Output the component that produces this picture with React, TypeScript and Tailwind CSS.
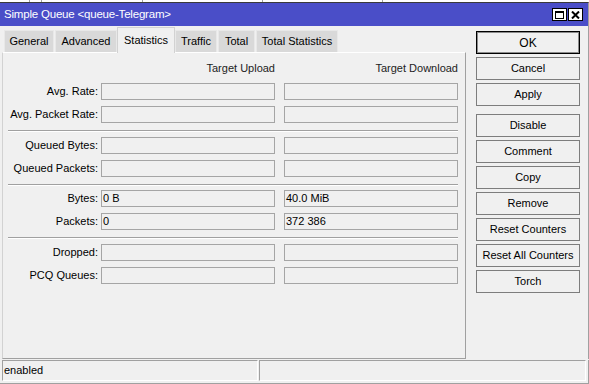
import React from 'react';

const tabs = [
  { label: 'General', w: 'w-[50px]', ml: 'ml-[2px]' },
  { label: 'Advanced', w: 'w-[62px]', ml: 'ml-[1px]' },
  { label: 'Statistics', w: 'w-[58px]', ml: 'ml-0', active: true },
  { label: 'Traffic', w: 'w-[42px]', ml: 'ml-0' },
  { label: 'Total', w: 'w-[37px]', ml: 'ml-[1px]' },
  { label: 'Total Statistics', w: 'w-[82px]', ml: 'ml-[1px]' },
];

const groups: { label: string; up?: string; down?: string }[][] = [
  [{ label: 'Avg. Rate:' }, { label: 'Avg. Packet Rate:' }],
  [{ label: 'Queued Bytes:' }, { label: 'Queued Packets:' }],
  [
    { label: 'Bytes:', up: '0 B', down: '40.0 MiB' },
    { label: 'Packets:', up: '0', down: '372 386' },
  ],
  [{ label: 'Dropped:' }, { label: 'PCQ Queues:' }],
];

const sepGaps = ['mt-[7px] mb-[5px]', 'mt-[7px] mb-[4px]', 'mt-[7px] mb-[5px]'];

const buttons = [
  ['Cancel', 'mt-[3px]'],
  ['Apply', 'mt-[3px]'],
  ['Disable', 'mt-[8px]'],
  ['Comment', 'mt-[3px]'],
  ['Copy', 'mt-[3px]'],
  ['Remove', 'mt-[3px]'],
  ['Reset Counters', 'mt-[3px]'],
  ['Reset All Counters', 'mt-[3px]'],
  ['Torch', 'mt-[3px]'],
];

function Field({ value }: { value?: string }) {
  return (
    <div className="w-[174px] h-[17px] border border-[#a5a5a5] pl-[1px] flex items-center leading-none text-black">
      {value}
    </div>
  );
}

function Row({ label, up, down }: { label: string; up?: string; down?: string }) {
  return (
    <div className="flex items-center h-[17px]">
      <div className="w-[95px] text-right text-black">{label}</div>
      <div className="ml-[3px]">
        <Field value={up} />
      </div>
      <div className="ml-[9px]">
        <Field value={down} />
      </div>
    </div>
  );
}

function Btn({ label, cls, primary }: { label: string; cls: string; primary?: boolean }) {
  return (
    <div
      className={
        'h-[23px] w-[104px] flex items-center justify-center text-black bg-[#f0f0f0] ' +
        (primary
          ? 'border border-black shadow-[inset_0_0_0_1px_#8c8c8c] text-[12px] '
          : 'border border-[#7d7d7d] ') +
        cls
      }
    >
      {label}
    </div>
  );
}

export default function App() {
  return (
    <div
      className="w-[589px] h-[384px] bg-[#f0f0f0] flex flex-col overflow-hidden text-[11px] select-none"
      style={{ fontFamily: '"Liberation Sans", Arial, sans-serif' }}
    >
      {/* window behind */}
      <div className="h-[2px] bg-white flex">
        <div className="w-[30px] border-r border-[#a0a0a0]" />
        <div className="w-[12px] border-r border-[#a0a0a0]" />
        <div className="w-[101px] border-r border-[#a0a0a0]" />
        <div className="w-[120px] border-r border-[#a0a0a0]" />
        <div className="w-[120px] border-r border-[#a0a0a0]" />
      </div>

      {/* title bar */}
      <div className="h-[24px] border-t border-[#3a3a3a] bg-[#4a4ec8] flex items-center justify-between pl-[4px] pr-[4px] border-r border-r-[#a0a0a0]">
        <span className="text-white text-[11.5px] tracking-[-0.2px]">Simple Queue &lt;queue-Telegram&gt;</span>
        <div className="flex gap-[1px] mr-[1px]">
          <div className="w-[15px] h-[13px] bg-white border border-black flex items-center justify-center">
            <div className="w-[9px] h-[8px] border border-black border-t-2" />
          </div>
          <div className="w-[15px] h-[13px] bg-white border border-black flex items-center justify-center">
            <svg width="9" height="8" viewBox="0 0 9 8">
              <path d="M1 0.5 L8 7.5 M8 0.5 L1 7.5" stroke="black" strokeWidth="2" />
            </svg>
          </div>
        </div>
      </div>

      {/* body */}
      <div className="h-[333px] flex pl-[2px] border-r border-[#a0a0a0]">
        <div className="w-[464px] flex flex-col">
          <div className="h-[26px] flex items-end">
            {tabs.map((t) =>
              t.active ? (
                <div
                  key={t.label}
                  className={`${t.w} ${t.ml} h-[26px] -mb-[1px] relative z-10 bg-[#f0f0f0] border border-b-0 border-[#d2d2d2] flex items-start justify-center pt-[4px] text-black`}
                >
                  {t.label}
                </div>
              ) : (
                <div
                  key={t.label}
                  className={`${t.w} ${t.ml} h-[22px] bg-[#d9d9d9] border border-b-0 border-[#e8e8e8] flex items-center justify-center text-black`}
                >
                  {t.label}
                </div>
              )
            )}
          </div>
          <div className="h-[307px] border-t border-t-white border-l border-l-[#d2d2d2] border-r border-r-[#a0a0a0] border-b border-b-[#a0a0a0] flex flex-col">
            <div className="pt-[9px] flex h-[22px]">
              <div className="w-[272px] text-right text-[#222] leading-[13px]">Target Upload</div>
              <div className="w-[183px] text-right text-[#222] leading-[13px]">Target Download</div>
            </div>
            <div className="mt-[8px] flex flex-col">
              {groups.map((g, gi) => (
                <React.Fragment key={gi}>
                  <div className="flex flex-col gap-[6px]">
                    {g.map((r) => (
                      <Row key={r.label} {...r} />
                    ))}
                  </div>
                  {gi < groups.length - 1 && (
                    <div
                      className={`${sepGaps[gi]} ml-[5px] w-[450px] h-[2px] border-t border-[#a0a0a0] border-b border-b-white`}
                    />
                  )}
                </React.Fragment>
              ))}
            </div>
          </div>
        </div>

        <div className="ml-[10px] pt-[5px] flex flex-col">
          <Btn label="OK" cls="" primary />
          {buttons.map(([l, c]) => (
            <Btn key={l} label={l} cls={c} />
          ))}
        </div>
      </div>

      {/* status bar */}
      <div className="mt-[1px] h-[21px] flex pl-[2px] pr-[2px] border-r border-[#a0a0a0]">
        <div className="w-[256px] border-t border-l border-[#a0a0a0] border-b border-b-white border-r border-r-white flex items-center pl-[1px] text-black">
          enabled
        </div>
        <div className="ml-[1px] flex-1 border-t border-l border-[#a0a0a0] border-b border-b-white border-r border-r-white" />
      </div>
      <div className="flex-1 border-b border-[#a0a0a0] border-r border-r-[#a0a0a0]" />
    </div>
  );
}
